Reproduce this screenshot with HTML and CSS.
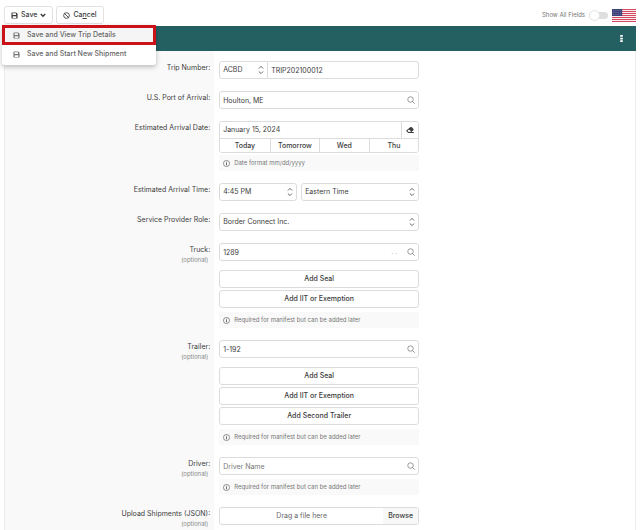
FILE: index.html
```html
<!DOCTYPE html>
<html lang="en">
<head>
    <meta charset="utf-8">
    <meta name="viewport" content="width=device-width">
    <title>New Trip</title>
    <link rel="stylesheet" href="styles.css">
</head>
<body>
    <!-- shared icons -->
    <svg class="sprite" width="0" height="0">
        <symbol id="i-save" viewBox="0 0 16 16"><path fill="currentColor" fill-rule="evenodd" d="M3 1h9l3 3v9a2 2 0 0 1-2 2H3a2 2 0 0 1-2-2V3a2 2 0 0 1 2-2zm.5 2v4h8V3zM4 9.500v4h8v-4z"/></symbol>
        <symbol id="i-ban" viewBox="0 0 16 16"><g fill="none" stroke="currentColor" stroke-width="2"><circle cx="8" cy="8" r="6.500"/><path d="M3.500 3.500l9 9"/></g></symbol>
        <symbol id="i-search" viewBox="0 0 16 16"><g fill="none" stroke="currentColor" stroke-width="1.500"><circle cx="7" cy="7" r="5.500"/><path d="M11 11l4.500 4.500"/></g></symbol>
        <symbol id="i-sort" viewBox="0 0 10 16"><path fill="none" stroke="currentColor" stroke-width="1.500" d="M1.500 5.500L5 2l3.500 3.500M1.500 10.500L5 14l3.500-3.500"/></symbol>
        <symbol id="i-info" viewBox="0 0 16 16"><circle cx="8" cy="8" r="7" fill="none" stroke="currentColor" stroke-width="1.400"/><path stroke="currentColor" stroke-width="2" d="M8 7v5M8 4v2"/></symbol>
        <symbol id="i-eraser" viewBox="0 0 16 16"><path fill="currentColor" fill-rule="evenodd" d="M9 2.200a1.500 1.500 0 0 1 2 0l4 4a1.500 1.500 0 0 1 0 2L11 12h4.500v2H4.500L1 10.500a1.500 1.500 0 0 1 0-2zM5.800 7L3 9.700 5.300 12h3l1.800-1.500z"/></symbol>
    </svg>

    <div class="toolbar">
        <div class="save-wrap">
            <button class="btn"><svg class="icon"><use href="#i-save"/></svg>Save
                <svg class="caret" viewBox="0 0 8 6"><path fill="none" stroke="currentColor" stroke-width="1.800" d="M1 1l3 3 3-3"/></svg></button>
            <div class="menu">
                <button class="menu-item active"><svg class="icon"><use href="#i-save"/></svg>Save and View Trip Details</button>
                <button class="menu-item"><svg class="icon"><use href="#i-save"/></svg>Save and Start New Shipment</button>
            </div>
        </div>
        <button class="btn"><svg class="icon"><use href="#i-ban"/></svg><span>Ca<u>n</u>cel</span></button>
        <div class="toolbar-right">
            <label for="show-all">Show All Fields</label>
            <input type="checkbox" id="show-all" class="toggle">
            <svg class="flag" viewBox="0 0 26 13" preserveAspectRatio="none">
                <path fill="#fbeef0" d="M0 0h26v13H0z"/>
                <path stroke="#d0425a" d="M0 .5h26M0 2.500h26M0 4.500h26M0 6.500h26M0 8.500h26M0 10.500h26M0 12.500h26"/>
                <path fill="#3f437c" d="M0 0h11v7H0z"/>
                <path stroke="#9a9cc0" stroke-width=".6" stroke-dasharray=".7 1.300" d="M1 1.500h9M1 3.500h9M1 5.500h9"/>
            </svg>
        </div>
    </div>

    <div class="panel">
        <div class="panel-header">
            <button class="more" aria-label="More"><svg viewBox="0 0 3 8"><path fill="currentColor" d="M0 0h3v2H0zM0 3h3v2H0zM0 6h3v2H0z"/></svg></button>
        </div>
        <form class="form">
            <div class="row">
                <div class="label"><label for="trip">Trip Number:</label></div>
                <div class="field joined">
                    <div class="control prefix">
                        <select aria-label="Carrier code"><option>ACBD</option></select>
                        <svg class="sort"><use href="#i-sort"/></svg>
                    </div>
                    <div class="control"><input type="text" id="trip" value="TRIP202100012"></div>
                </div>
            </div>

            <div class="row">
                <div class="label"><label for="port">U.S. Port of Arrival:</label></div>
                <div class="field">
                    <div class="control">
                        <input type="text" id="port" value="Houlton, ME">
                        <svg class="search"><use href="#i-search"/></svg>
                    </div>
                </div>
            </div>

            <div class="row">
                <div class="label"><label for="date">Estimated Arrival Date:</label></div>
                <div class="field">
                    <div class="date">
                        <div class="date-top">
                            <input type="text" id="date" value="January 15, 2024">
                            <button type="button" class="clear" aria-label="Clear"><svg class="eraser"><use href="#i-eraser"/></svg></button>
                        </div>
                        <div class="days">
                            <button type="button">Today</button>
                            <button type="button">Tomorrow</button>
                            <button type="button">Wed</button>
                            <button type="button">Thu</button>
                        </div>
                    </div>
                    <div class="hint"><svg class="icon"><use href="#i-info"/></svg>Date format mm/dd/yyyy</div>
                </div>
            </div>

            <div class="row">
                <div class="label"><label for="time">Estimated Arrival Time:</label></div>
                <div class="field pair">
                    <div class="control time">
                        <select id="time"><option>4:45 PM</option></select>
                        <svg class="sort"><use href="#i-sort"/></svg>
                    </div>
                    <div class="control">
                        <select aria-label="Time zone"><option>Eastern Time</option></select>
                        <svg class="sort"><use href="#i-sort"/></svg>
                    </div>
                </div>
            </div>

            <div class="row">
                <div class="label"><label for="role">Service Provider Role:</label></div>
                <div class="field">
                    <div class="control">
                        <select id="role"><option>Border Connect Inc.</option></select>
                        <svg class="sort"><use href="#i-sort"/></svg>
                    </div>
                </div>
            </div>

            <div class="row">
                <div class="label"><label for="truck">Truck:</label><small>(optional)</small></div>
                <div class="field">
                    <div class="control">
                        <input type="text" id="truck" value="1289">
                        <span class="dots">. .</span>
                        <svg class="search"><use href="#i-search"/></svg>
                    </div>
                    <div class="actions">
                        <button type="button">Add Seal</button>
                        <button type="button">Add IIT or Exemption</button>
                    </div>
                    <div class="hint"><svg class="icon"><use href="#i-info"/></svg>Required for manifest but can be added later</div>
                </div>
            </div>

            <div class="row">
                <div class="label"><label for="trailer">Trailer:</label><small>(optional)</small></div>
                <div class="field">
                    <div class="control">
                        <input type="text" id="trailer" value="1-192">
                        <svg class="search"><use href="#i-search"/></svg>
                    </div>
                    <div class="actions">
                        <button type="button">Add Seal</button>
                        <button type="button">Add IIT or Exemption</button>
                        <button type="button">Add Second Trailer</button>
                    </div>
                    <div class="hint"><svg class="icon"><use href="#i-info"/></svg>Required for manifest but can be added later</div>
                </div>
            </div>

            <div class="row">
                <div class="label"><label for="driver">Driver:</label><small>(optional)</small></div>
                <div class="field">
                    <div class="control">
                        <input type="text" id="driver" placeholder="Driver Name">
                        <svg class="search"><use href="#i-search"/></svg>
                    </div>
                    <div class="hint"><svg class="icon"><use href="#i-info"/></svg>Required for manifest but can be added later</div>
                </div>
            </div>

            <div class="row">
                <div class="label"><label for="browse">Upload Shipments (JSON):</label><small>(optional)</small></div>
                <div class="field">
                    <div class="upload">
                        <span>Drag a file here</span>
                        <button type="button" id="browse">Browse</button>
                    </div>
                </div>
            </div>
        </form>
    </div>
</body>
</html>
```
FILE: styles.css
```css
* {box-sizing: border-box;}
body {
    margin: 0;
    padding: 0 4px;
    min-height: 100vh;
    display: flex;
    flex-direction: column;
    background: #fff;
    color: #3c3c3c;
    font: 7px/10px Inter, "Liberation Sans", sans-serif;
}
button, input, select {font: inherit; color: inherit; margin: 0;}
button {cursor: pointer; padding: 0; border: 0; background: #fff;}
.sprite {position: absolute;}
.icon {width: 7px; height: 7px; flex: none;}

/* toolbar */
.toolbar {display: flex; align-items: center; gap: 3px; height: 26px; padding-top: 4px;}
.btn {
    display: flex;
    align-items: center;
    gap: 3px;
    height: 18px;
    padding: 0 6px;
    border: 1px solid #e2e2e2;
    border-radius: 3px;
    font-weight: 500;
}
.caret {width: 6px; height: 5px;}
.save-wrap {position: relative;}
.menu {
    position: absolute;
    z-index: 2;
    top: 19px;
    left: -2px;
    width: 154px;
    padding-bottom: 2px;
    background: #fff;
    border-radius: 3px;
    box-shadow: 0 2px 5px rgba(0, 0, 0, .25);
}
.menu-item {
    display: flex;
    align-items: center;
    gap: 7px;
    width: 100%;
    height: 18px;
    padding: 0 11px;
    color: #666;
    font-weight: 500;
    white-space: nowrap;
}
.menu-item .icon {color: #777;}
.menu-item.active {height: 20px; padding: 0 8px; border: 3px solid #cc1219; background: #f5f5f5;}
.toolbar-right {display: flex; align-items: center; gap: 4px; margin-left: auto; font-size: 6px; color: #777;}
.toggle {
    appearance: none;
    display: flex;
    align-items: center;
    width: 19px;
    height: 7px;
    border-radius: 4px;
    background: #dedede;
}
.toggle::before {content: ""; width: 9px; height: 9px; flex: none; border: 1px solid #e4e4e4; border-radius: 50%; background: #fff;}
.flag {width: 24px; height: 13px;}

/* panel */
.panel {flex: 1; display: flex; flex-direction: column; border: 1px solid #ececec; border-width: 0 1px;}
.panel-header {
    display: flex;
    align-items: center;
    justify-content: flex-end;
    height: 25px;
    margin: 0 -1px;
    padding-right: 13px;
    background: #245f62;
}
.more {display: flex; color: #fff; background: none;}
.more svg {width: 3px; height: 7px;}
.form {
    flex: 1;
    display: flex;
    flex-direction: column;
    gap: 12px;
    padding: 10px 0 5px;
    background: linear-gradient(to right, #f9f9f9 33.2%, #fff 33.2%);
}
.row {display: grid; grid-template-columns: 33.2% minmax(0, 200px); column-gap: 5px;}
.label {display: flex; flex-direction: column; align-items: flex-end; padding: 2px 4px 0 0; height: 18px;}
.label small {padding-right: 2px; font-size: 6px; line-height: 9px; color: #888;}

/* fields */
.control {position: relative; display: flex; flex: 1;}
.control input, .control select {
    appearance: none;
    width: 100%;
    min-width: 0;
    height: 18px;
    padding: 0 3px;
    border: 1px solid #dcdcdc;
    border-radius: 3px;
    background: #fff;
    line-height: 16px;
}
input::placeholder {color: #777; opacity: 1;}
.control svg {position: absolute; right: 4px; top: 5px; pointer-events: none;}
.search {width: 8px; height: 8px; color: #777;}
.control .sort {top: 4px; width: 6px; height: 10px; color: #555;}
.dots {position: absolute; right: 22px; top: 4px; color: #bbb;}
.joined, .pair {display: flex;}
.pair {gap: 4px;}
.time {flex: 0 0 78px;}
.prefix {flex: 0 0 49px; margin-right: -1px;}
.joined .prefix select {border-radius: 3px 0 0 3px;}
.joined input {border-radius: 0 3px 3px 0;}

.date {border: 1px solid #dcdcdc; border-radius: 3px; overflow: hidden;}
.date-top {display: flex; height: 16px;}
.date-top input {flex: 1; min-width: 0; padding: 0 3px; border: 0;}
.clear {display: flex; align-items: center; justify-content: center; width: 17px; border-left: 1px solid #dcdcdc;}
.eraser {width: 8px; height: 8px;}
.days {display: grid; grid-template-columns: repeat(4, 1fr); border-top: 1px solid #dcdcdc;}
.days button {height: 13px; font-weight: 500;}
.days button + button {border-left: 1px solid #dcdcdc;}
.date + .hint {margin-top: 2px;}

.actions {display: flex; flex-direction: column; gap: 2px; margin-top: 9px;}
.actions button {height: 18px; border: 1px solid #dcdcdc; border-radius: 3px; font-weight: 500;}
.hint {
    display: flex;
    align-items: center;
    gap: 4px;
    height: 16px;
    margin-top: 4px;
    padding-left: 4px;
    background: #f9f9f9;
    font-size: 6px;
    color: #777;
    white-space: nowrap;
}
.hint .icon {color: #555;}

.upload {display: flex; height: 18px; border: 1px solid #dcdcdc; border-radius: 3px; overflow: hidden;}
.upload span {flex: 1; line-height: 16px; text-align: center; color: #666;}
.upload button {width: 35px; background: #f8f8f8; font-weight: 500;}
```
